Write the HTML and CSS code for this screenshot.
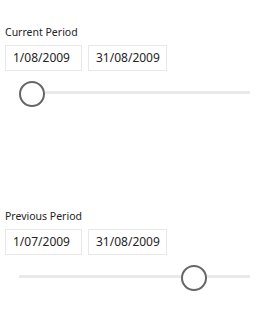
FILE: index.html
```html
<!DOCTYPE html>
<html lang="en">
<head>
    <meta charset="UTF-8">
    <title>Period Slicers</title>
    <link rel="stylesheet" href="styles.css">
</head>
<body>
    <div class="page">
        <div class="slicer">
            <div class="slicer-label">Current Period</div>
            <div class="date-row">
                <div class="date-box start">1/08/2009</div>
                <div class="date-box end">31/08/2009</div>
            </div>
            <div class="range">
                <div class="track"></div>
                <div class="thumb" style="left: 0%;"></div>
            </div>
        </div>

        <div class="slicer second">
            <div class="slicer-label">Previous Period</div>
            <div class="date-row">
                <div class="date-box start">1/07/2009</div>
                <div class="date-box end">31/08/2009</div>
            </div>
            <div class="range">
                <div class="track"></div>
                <div class="thumb" style="left: 70%;"></div>
            </div>
        </div>
    </div>
</body>
</html>
```

FILE: styles.css
```css
body {
    margin: 0;
    background: #fff;
    font-family: "Noto Sans", "DejaVu Sans", sans-serif;
    color: #252423;
}
.page {
    width: 272px;
    height: 336px;
    padding: 25px 0 0 5px;
    box-sizing: border-box;
}
.slicer {
    height: 82px;
}
.slicer.second {
    margin-top: 102px;
}
.slicer-label {
    font-size: 10.5px;
    line-height: 14px;
    height: 14px;
}
.date-row {
    display: flex;
    gap: 6px;
    margin-top: 6px;
}
.date-box {
    height: 26px;
    border: 1px solid #e8e8e8;
    box-sizing: border-box;
    font-size: 12px;
    line-height: 24px;
    padding-left: 7px;
    color: #252423;
}
.date-box.start {
    width: 77px;
}
.date-box.end {
    width: 79px;
}
.range {
    position: relative;
    margin: 10px 22px 0 14px;
    height: 26px;
}
.track {
    position: absolute;
    left: 0;
    right: 0;
    top: 10px;
    height: 3px;
    background: #e9e9e9;
}
.thumb {
    position: absolute;
    top: 0;
    width: 26px;
    height: 26px;
    box-sizing: border-box;
    border: 2.5px solid #666;
    border-radius: 50%;
    background: #fff;
}
```
